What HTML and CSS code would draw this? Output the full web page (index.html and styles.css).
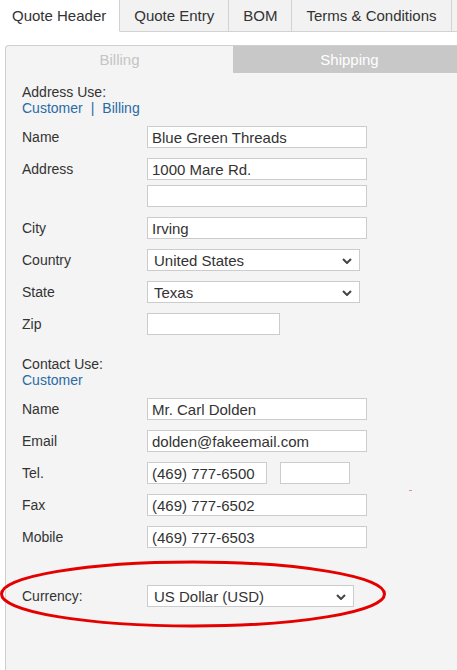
FILE: index.html
```html
<!DOCTYPE html>
<html lang="en">
<head>
<meta charset="utf-8">
<title>Quote Header</title>
<link rel="stylesheet" href="styles.css">
</head>
<body>
<div class="page">
  <nav class="tabs">
    <div class="tab tab-first active">Quote Header</div>
    <div class="tab">Quote Entry</div>
    <div class="tab">BOM</div>
    <div class="tab">Terms &amp; Conditions</div>
    <div class="tab tab-rest"></div>
  </nav>

  <section class="panel">
    <div class="subtabs">
      <div class="subtab">Billing</div>
      <div class="subtab subtab-alt">Shipping</div>
    </div>

    <div class="content">
      <div class="use">
        <div class="use-title">Address Use:</div>
        <div class="use-links"><span class="link">Customer</span><span class="sep">|</span><span class="link">Billing</span></div>
      </div>

      <div class="row"><span class="label">Name</span><div class="field"><input class="input w-full" value="Blue Green Threads"></div></div>
      <div class="row"><span class="label">Address</span><div class="field stack"><input class="input w-full" value="1000 Mare Rd."><input class="input w-full" value=""></div></div>
      <div class="row"><span class="label">City</span><div class="field"><input class="input w-full" value="Irving"></div></div>
      <div class="row"><span class="label">Country</span><div class="field"><div class="select w-select"><span>United States</span><svg class="chev" width="10" height="6" viewBox="0 0 10 6"><polyline points="1,1 5,5 9,1" fill="none" stroke="#444" stroke-width="2"/></svg></div></div></div>
      <div class="row"><span class="label">State</span><div class="field"><div class="select w-select"><span>Texas</span><svg class="chev" width="10" height="6" viewBox="0 0 10 6"><polyline points="1,1 5,5 9,1" fill="none" stroke="#444" stroke-width="2"/></svg></div></div></div>
      <div class="row"><span class="label">Zip</span><div class="field"><input class="input w-zip" value=""></div></div>

      <div class="use use-second">
        <div class="use-title">Contact Use:</div>
        <div class="use-links"><span class="link">Customer</span></div>
      </div>

      <div class="row"><span class="label">Name</span><div class="field"><input class="input w-full" value="Mr. Carl Dolden"></div></div>
      <div class="row"><span class="label">Email</span><div class="field"><input class="input w-full" value="dolden@fakeemail.com"></div></div>
      <div class="row"><span class="label">Tel.</span><div class="field inline"><input class="input w-tel" value="(469) 777-6500"><input class="input w-ext" value=""></div></div>
      <div class="row"><span class="label">Fax</span><div class="field"><input class="input w-full" value="(469) 777-6502"></div></div>
      <div class="row"><span class="label">Mobile</span><div class="field"><input class="input w-full" value="(469) 777-6503"></div></div>

      <div class="row row-currency"><span class="label">Currency:</span><div class="field"><div class="select w-currency"><span>US Dollar (USD)</span><svg class="chev" width="10" height="6" viewBox="0 0 10 6"><polyline points="1,1 5,5 9,1" fill="none" stroke="#444" stroke-width="2"/></svg></div></div></div>
    </div>
  </section>

  <span class="red-dash"></span>
  <svg class="highlight" width="392" height="72" viewBox="0 0 392 72">
    <ellipse cx="194" cy="35" rx="191.5" ry="32" fill="none" stroke="#e50000" stroke-width="3"/>
  </svg>
</div>
</body>
</html>
```
FILE: styles.css
```css
html, body {
  margin: 0;
  padding: 0;
  background: #ffffff;
  overflow: hidden;
}

body {
  font-family: "Liberation Sans", Arial, sans-serif;
  color: #333333;
}

.page {
  position: relative;
  width: 457px;
  height: 670px;
  display: flex;
  flex-direction: column;
  overflow: hidden;
}

/* top tabs */
.tabs {
  display: flex;
  flex-wrap: nowrap;
  height: 32px;
  flex: none;
}

.tab {
  flex: none;
  height: 31px;
  line-height: 31px;
  padding: 0 14px;
  font-size: 15px;
  color: #333333;
  background: #f2f2f2;
  border-right: 1px solid #d2d2d2;
  border-bottom: 1px solid #d2d2d2;
  white-space: nowrap;
}

.tab-first {
  padding: 0 13px 0 12px;
}

.tab.active {
  background: #ffffff;
  border-bottom-color: #ffffff;
}

.tab-rest {
  flex: 1;
  padding: 0;
  border-right: none;
}

/* panel */
.panel {
  flex: 1;
  margin: 13px 0 0 5px;
  width: 460px;
  background: #f4f4f4;
  border: 1px solid #cfcfcf;
  border-right: none;
  border-bottom: none;
  border-radius: 4px 0 0 0;
}

.subtabs {
  display: grid;
  grid-template-columns: 227px 1fr;
  height: 26px;
}

.subtab {
  text-align: center;
  line-height: 27px;
  font-size: 15px;
  color: #c4c4c4;
  border-top-left-radius: 4px;
}

.subtab-alt {
  background: #c8c8c8;
  color: #ffffff;
  border-radius: 0;
}

.content {
  padding: 12px 16px 0 16px;
}

.use {
  font-size: 14px;
  line-height: 16px;
  margin-bottom: 10px;
}

.use-second {
  margin-top: 21px;
}

.use-title {
  color: #333333;
}

.use-links {
  color: #2a6aa6;
}

.sep {
  margin: 0 8px;
}

.row {
  display: grid;
  grid-template-columns: 125px auto;
  align-items: start;
  margin-bottom: 10px;
}

.label {
  font-size: 14px;
  line-height: 22px;
  color: #333333;
}

.field {
  display: flex;
}

.stack {
  flex-direction: column;
  gap: 5px;
}

.inline {
  gap: 13px;
}

.input {
  box-sizing: border-box;
  height: 22px;
  margin: 0;
  padding: 0 4px;
  border: 1px solid #cccccc;
  border-radius: 0;
  background: #ffffff;
  font-family: "Liberation Sans", Arial, sans-serif;
  font-size: 15px;
  color: #333333;
  outline: none;
}

.w-full { width: 220px; }
.w-zip { width: 133px; }
.w-tel { width: 120px; }
.w-ext { width: 70px; }
.w-select { width: 213px; }
.w-currency { width: 207px; }

.select {
  box-sizing: border-box;
  height: 22px;
  display: flex;
  align-items: center;
  justify-content: space-between;
  padding: 0 7px 0 6px;
  border: 1px solid #cccccc;
  background: #ffffff;
  font-size: 15px;
  color: #333333;
  white-space: nowrap;
}

.chev {
  flex: none;
  margin-top: 1px;
}

.row-currency {
  margin-top: 37px;
}

/* annotations */
.red-dash {
  position: absolute;
  left: 409px;
  top: 490px;
  width: 3px;
  height: 1px;
  background: #f08a8a;
}

.highlight {
  position: absolute;
  left: -1px;
  top: 559px;
}
```
